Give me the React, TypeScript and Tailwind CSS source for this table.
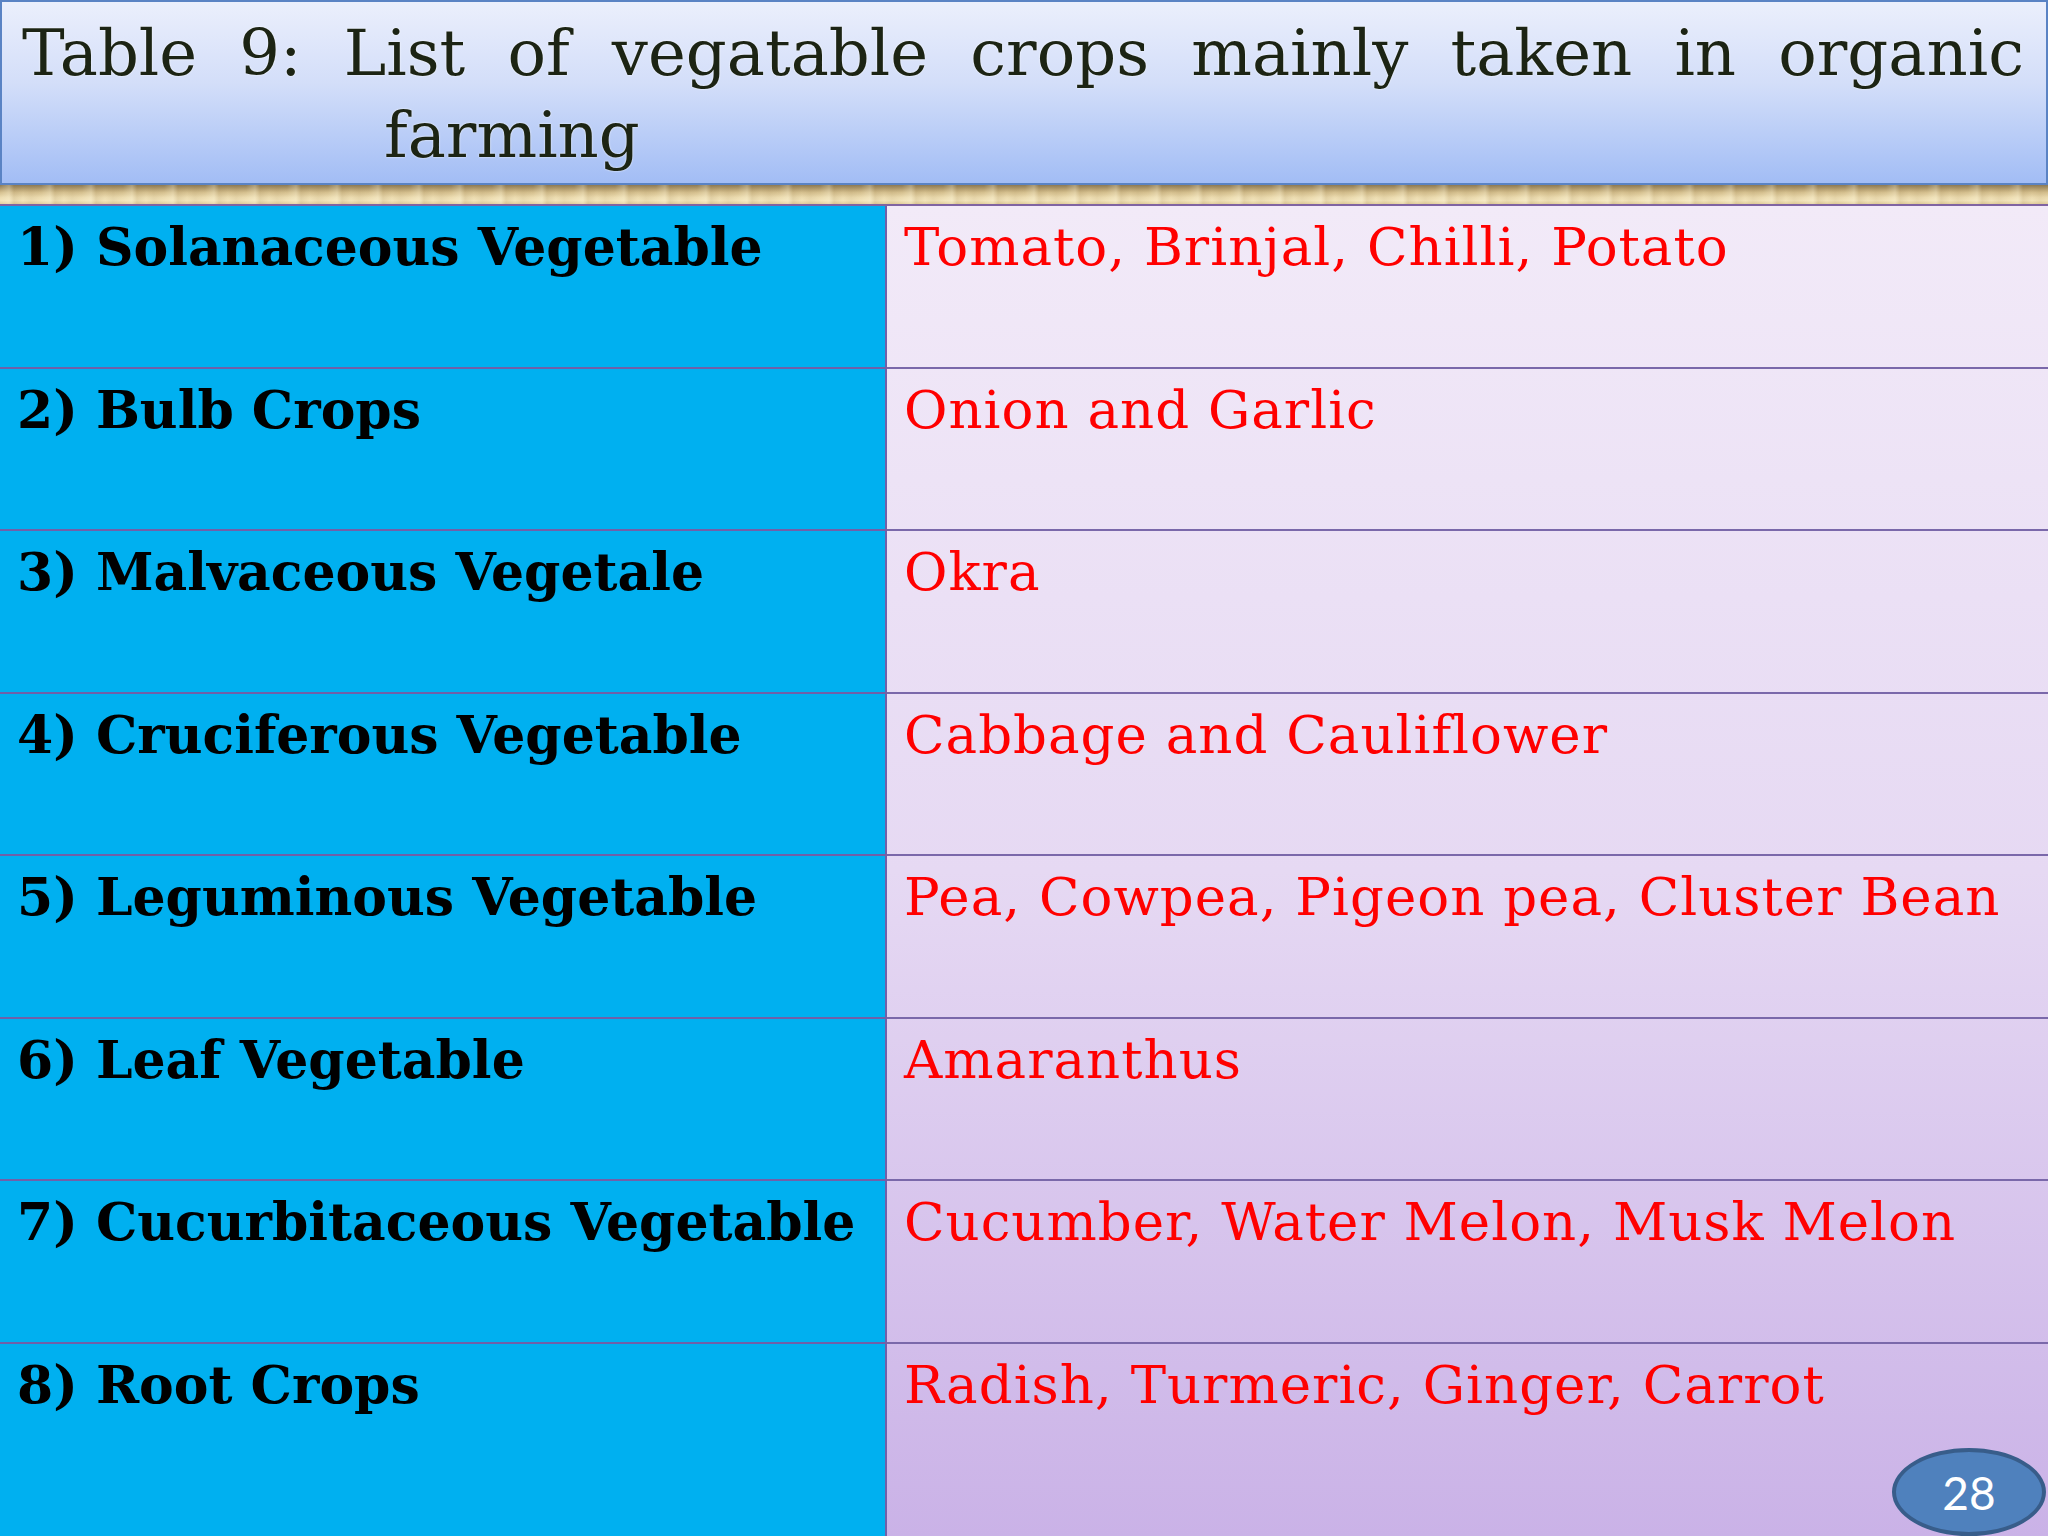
const rows = [
  { label: '1) Solanaceous Vegetable', crops: 'Tomato, Brinjal, Chilli, Potato' },
  { label: '2) Bulb Crops', crops: 'Onion and Garlic' },
  { label: '3) Malvaceous Vegetale', crops: 'Okra' },
  { label: '4) Cruciferous Vegetable', crops: 'Cabbage and Cauliflower' },
  { label: '5) Leguminous Vegetable', crops: 'Pea, Cowpea, Pigeon pea, Cluster Bean' },
  { label: '6) Leaf Vegetable', crops: 'Amaranthus' },
  { label: '7) Cucurbitaceous Vegetable', crops: 'Cucumber, Water Melon, Musk Melon' },
  { label: '8) Root Crops', crops: 'Radish, Turmeric, Ginger, Carrot' },
]

const titleWords = ['Table', '9:', 'List', 'of', 'vegatable', 'crops', 'mainly', 'taken', 'in', 'organic']

export default function App() {
  return (
    <div className="relative w-[2048px] h-[1536px] overflow-hidden flex flex-col bg-white">
      {/* title banner */}
      <div
        className="h-[185px] shrink-0 border-2 border-[#5a83c4] bg-[linear-gradient(180deg,#ebeffc_0%,#d3def9_45%,#a2bdf5_100%)] pt-[10px] pl-[20px] pr-[22px] text-[64px] leading-[82px] text-[#1c2414] [text-shadow:0_0_2px_#ffffff]"
        style={{ fontFamily: '"DejaVu Serif", serif' }}
      >
        <div className="flex justify-between">
          {titleWords.map(w => <span key={w}>{w}</span>)}
        </div>
        <div className="pl-[362px]">farming</div>
      </div>

      {/* wood strip */}
      <div className="h-[19px] shrink-0 bg-[linear-gradient(180deg,#8c7a56_0%,#b09a6c_18%,#d6c190_40%,#ecdcb0_65%,#f2e4bb_82%,#e2cf9e_100%)]">
        <div className="h-full w-full bg-[repeating-linear-gradient(90deg,rgba(255,255,255,0)_0px,rgba(255,250,225,0.25)_9px,rgba(140,110,60,0.12)_14px,rgba(255,255,255,0)_23px,rgba(140,110,60,0.08)_31px,rgba(255,255,255,0)_41px)]" />
      </div>

      {/* table */}
      <div className="flex-1 grid grid-cols-[887px_1fr] grid-rows-[repeat(7,162.5px)_1fr] border-t-2 border-[#8064a2] bg-[linear-gradient(180deg,#f2eaf8_0%,#e6d9f3_50%,#cab2e7_100%)]">
        {rows.map((r, i) => (
          <div key={r.label} className="contents">
            <div
              className={`bg-[#00b0f0] border-r-2 border-[#7160a8] pl-[17px] pt-[10px] text-[52px] leading-[62px] font-bold text-black ${i < rows.length - 1 ? 'border-b-2' : ''}`}
              style={{ fontFamily: '"DejaVu Serif", serif' }}
            >
              {r.label}
            </div>
            <div
              className={`border-[#7a68aa] pl-[17px] pt-[10px] text-[53px] leading-[62px] tracking-[1px] text-[#ff0000] ${i < rows.length - 1 ? 'border-b-2' : ''}`}
              style={{ fontFamily: '"DejaVu Serif", serif' }}
            >
              {r.crops}
            </div>
          </div>
        ))}
      </div>

      {/* slide number */}
      <div className="absolute left-[1892px] top-[1448px] w-[154px] h-[88px] rounded-[50%] bg-[#4f81bd] border-[4px] border-[#385d8a] flex items-center justify-center">
        <span className="text-white text-[46px] leading-none pt-[2px]" style={{ fontFamily: 'Lato, sans-serif' }}>28</span>
      </div>
    </div>
  )
}
